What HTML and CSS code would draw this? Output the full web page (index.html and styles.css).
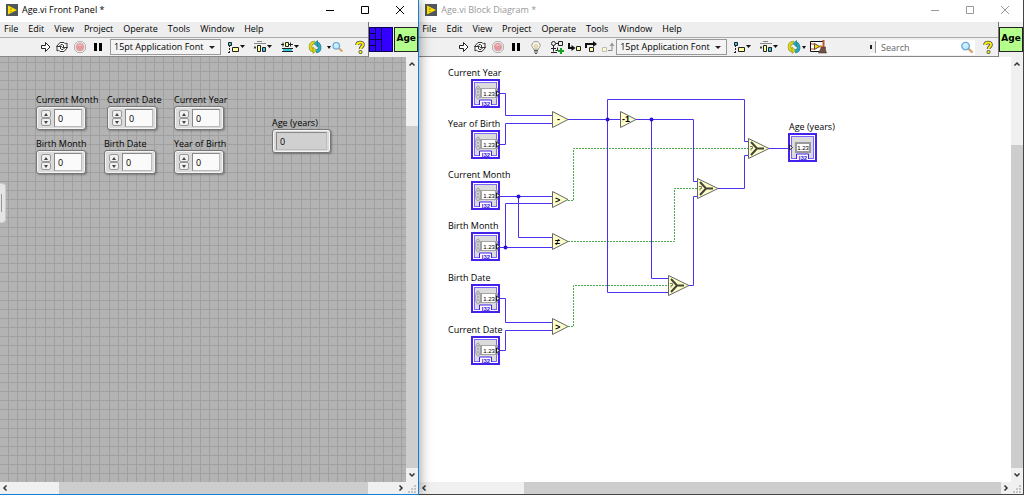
FILE: index.html
```html
<!doctype html>

<html lang="en">

	<head>
		<meta charset="utf-8" />
		<title>Age.vi</title>

		<link rel="stylesheet" href="styles.css">
	</head>

	<body>

		<!-- shared icons -->
		<svg class="defs" width="0" height="0" aria-hidden="true">
			<symbol id="i-app" viewBox="0 0 12 12">
				<rect width="12" height="12" fill="#50575c" />
				<path d="M2 1.5L11 6L2 10.5Z" fill="#ffe000" />
				<path d="M4 5h2M5 4v2M4 7.500h2" stroke="#a58a00" stroke-width=".6" />
			</symbol>
			<symbol id="i-min" viewBox="0 0 10 10"><path d="M1 5.500h8" stroke="currentColor" /></symbol>
			<symbol id="i-max" viewBox="0 0 10 10"><path d="M1.500 1.500h7v7h-7z" fill="none" stroke="currentColor" /></symbol>
			<symbol id="i-close" viewBox="0 0 10 10"><path d="M1 1l8 8M9 1l-8 8" stroke="currentColor" /></symbol>
			<symbol id="i-run" viewBox="0 0 16 16"><path d="M4.500 6.500h4v-3l4.500 4.500l-4.500 4.500v-3h-4z" fill="#fff" stroke="#222" /></symbol>
			<symbol id="i-loop" viewBox="0 0 16 16">
				<path d="M2.500 7.500L6 3.500h4l1.500 1.500L13 4v4.500H8.500L10 7L8.500 5.500H7L5 7.500z" fill="#fff" stroke="#333" />
				<path d="M13.500 8.500L10 12.500H6L4.500 11L3 12V7.500h4.500L6 9l1.500 1.500H9L11 8.500z" fill="#fff" stroke="#333" />
			</symbol>
			<symbol id="i-stop" viewBox="0 0 16 16">
				<path d="M5.500 2.500h5l3 3v5l-3 3h-5l-3-3v-5z" fill="#e4e4e4" stroke="#b4b4b4" />
				<circle cx="8" cy="8" r="4" fill="#e39a9e" />
				<path d="M5 7c1-2.500 5-2.500 6 0z" fill="#efb8bb" />
			</symbol>
			<symbol id="i-pause" viewBox="0 0 16 16"><path d="M4 4h3v8H4zM9 4h3v8H9z" fill="#000" /></symbol>
			<symbol id="i-bulb" viewBox="0 0 16 16">
				<path d="M6 10C2 7 4 2.500 8 2.500S14 7 10 10v1H6z" fill="#f6f3e2" stroke="#999" />
				<path d="M6.500 6l1 4M9.500 6l-1 4M6.500 6h3" fill="none" stroke="#d8c490" />
				<path d="M6 11.500h4M6 13h4M7 14.500h2" stroke="#555" />
			</symbol>
			<symbol id="i-retain" viewBox="0 0 16 16">
				<circle cx="4.500" cy="4.500" r="2" fill="none" stroke="#222" />
				<path d="M4.500 6.500v6M2 13.500h6M7 4.500h2M9.500 2.500h4v4h-4z" fill="none" stroke="#222" />
				<path d="M2 9.500h5M8.500 8.500v3h-2" fill="none" stroke="#222" />
				<path d="M9 12h6M12 9v6" stroke="#13a322" stroke-width="2" />
			</symbol>
			<symbol id="i-into" viewBox="0 0 16 16">
				<path d="M3 4v5h3" fill="none" stroke="#111" stroke-width="2" />
				<path d="M5.500 6l4 3l-4 3z" fill="#111" />
				<path d="M10.500 7.500h4v4h-4z" fill="#ffffb0" stroke="#222" />
			</symbol>
			<symbol id="i-over" viewBox="0 0 16 16">
				<path d="M3 9V5h8" fill="none" stroke="#111" stroke-width="2" />
				<path d="M10 2l4 3l-4 3z" fill="#111" />
				<path d="M6.500 8.500h4v4h-4z" fill="#ffffb0" stroke="#222" />
			</symbol>
			<symbol id="i-out" viewBox="0 0 16 16">
				<path d="M2.500 8.500h4v4h-4z" fill="#ffffc4" stroke="#bbb" />
				<path d="M8 11.500h4V6" fill="none" stroke="#888" />
				<path d="M9.500 7L12 3.500L14.500 7z" fill="#999" />
			</symbol>
			<symbol id="i-align" viewBox="0 0 20 16">
				<path d="M3.500 3v11M2 13.500h3" stroke="#222" stroke-dasharray="2 1" />
				<path d="M2.500 3.500h3v3h-3z" fill="#39c7dd" stroke="#222" />
				<path d="M6.500 8.500h6v4h-6z" fill="#ffffa0" stroke="#222" />
				<path d="M14 6h5l-2.500 3z" fill="#111" />
			</symbol>
			<symbol id="i-dist" viewBox="0 0 20 16">
				<path d="M1 4.500h12M4 2.500h5" stroke="#888" />
				<path d="M1 8.500h2M2 7v3" stroke="#444" />
				<path d="M4.500 6.500h3v6h-3z" fill="#ffffa0" stroke="#222" />
				<path d="M9.500 8.500h3v4h-3z" fill="#39c7dd" stroke="#222" />
				<path d="M14 6h5l-2.500 3z" fill="#111" />
			</symbol>
			<symbol id="i-size" viewBox="0 0 20 16">
				<path d="M1 5.500h3M9 5.500h4M3 3.500v4M10.500 3.500v4" stroke="#222" />
				<path d="M5.500 3.500h3v4h-3z" fill="#ffffa0" stroke="#222" />
				<path d="M2 9.500h11M2 12.500h11" stroke="#222" />
				<path d="M3 10h9v2H3z" fill="#39c7dd" />
				<path d="M14 6h5l-2.500 3z" fill="#111" />
			</symbol>
			<symbol id="i-order" viewBox="0 0 16 16">
				<path d="M8 3.500C4.500 3.500 3 6 3.500 8.500C4 10.500 5.500 11.500 7 11.500" fill="none" stroke="#8f8b1c" stroke-width="3.500" />
				<path d="M8 3.500C4.500 3.500 3 6 3.500 8.500C4 10.500 5.500 11.500 7 11.500" fill="none" stroke="#dcd41c" stroke-width="2.500" />
				<path d="M6 8l4 3.500L6 14.500z" fill="#dcd41c" stroke="#8f8b1c" stroke-width=".6" />
				<path d="M9 12.500C12 12 13 10 12.500 7.500C12 5.500 11 4.500 9.500 4.500" fill="none" stroke="#1b6f80" stroke-width="3.500" />
				<path d="M9 12.500C12 12 13 10 12.500 7.500C12 5.500 11 4.500 9.500 4.500" fill="none" stroke="#28abc2" stroke-width="2.500" />
				<path d="M10.500 1.500L7 4.500l3.500 3.500z" fill="#28abc2" stroke="#1b6f80" stroke-width=".6" />
			</symbol>
			<symbol id="i-lens" viewBox="0 0 16 16">
				<path d="M9 9l5 4.500" stroke="#d9a066" stroke-width="2.500" />
				<circle cx="6.500" cy="6.500" r="4" fill="#c4ecff" stroke="#6aa8dd" stroke-width="1.500" />
				<path d="M4.500 6C5 4.500 6 4 7.500 4.500" fill="none" stroke="#fff" />
			</symbol>
			<symbol id="i-clean" viewBox="0 0 18 16">
				<path d="M1.500 2.500h12v10h-12z" fill="#fff" />
				<path d="M14 2.500H1.500v10H10" fill="none" stroke="#111" />
				<path d="M2 5h3M2 10h3" stroke="#e03030" />
				<path d="M5.500 4.500l5 3l-5 3z" fill="#ffe000" stroke="#222" stroke-width=".8" />
				<path d="M10 7.500h3" stroke="#e67817" stroke-width="2" />
				<path d="M14.500 1v7" stroke="#b9573c" stroke-width="2" />
				<path d="M12.500 8h4v3l1 3h-8z" fill="#705040" stroke="#402820" stroke-width=".5" />
			</symbol>
			<symbol id="i-help" viewBox="0 0 16 16">
				<path d="M5 6C5 2.500 11.500 2.500 11 6C10.500 8 8.500 8 8.500 10" fill="none" stroke="#444" stroke-width="3.500" />
				<circle cx="8.500" cy="13" r="2" fill="#444" />
				<path d="M5 6C5 2.500 11.500 2.500 11 6C10.500 8 8.500 8 8.500 10" fill="none" stroke="#ffee10" stroke-width="2" />
				<circle cx="8.500" cy="13" r="1.200" fill="#ffee10" />
			</symbol>
			<symbol id="i-chevron" viewBox="0 0 8 8"><path d="M1.500 5.500L4 3l2.500 2.500" fill="none" stroke="#333" stroke-width="1.500" /></symbol>
		</svg>

		<section class="window front">
			<header class="titlebar">
				<svg class="app-icon"><use href="#i-app" /></svg>
				<h1>Age.vi Front Panel *</h1>
				<button class="win-btn" aria-label="Minimize"><svg><use href="#i-min" /></svg></button>
				<button class="win-btn" aria-label="Maximize"><svg><use href="#i-max" /></svg></button>
				<button class="win-btn" aria-label="Close"><svg><use href="#i-close" /></svg></button>
			</header>

			<div class="bars">
				<nav class="menu">
					<button>File</button>
					<button>Edit</button>
					<button>View</button>
					<button>Project</button>
					<button>Operate</button>
					<button>Tools</button>
					<button>Window</button>
					<button>Help</button>
				</nav>
				<div class="toolbar">
					<button class="tool" aria-label="Run"><svg><use href="#i-run" /></svg></button>
					<button class="tool" aria-label="Run continuously"><svg><use href="#i-loop" /></svg></button>
					<button class="tool stop" aria-label="Abort"><svg><use href="#i-stop" /></svg></button>
					<button class="tool" aria-label="Pause"><svg><use href="#i-pause" /></svg></button>
					<div class="font-box">
						<select aria-label="Font">
							<option>15pt Application Font</option>
						</select>
					</div>
					<button class="tool drop" aria-label="Align objects"><svg><use href="#i-align" /></svg></button>
					<button class="tool drop" aria-label="Distribute objects"><svg><use href="#i-dist" /></svg></button>
					<button class="tool drop" aria-label="Resize objects"><svg><use href="#i-size" /></svg></button>
					<button class="tool wide" aria-label="Reorder"><svg><use href="#i-order" /></svg></button>
					<button class="tool find" aria-label="Search"><svg><use href="#i-lens" /></svg></button>
					<button class="tool help" aria-label="Context help"><svg><use href="#i-help" /></svg></button>
				</div>
				<div class="pane">
					<svg class="connector" viewBox="0 0 24 25">
						<rect width="24" height="25" fill="#3300ff" />
						<path d="M.5 .5h23v24H.5zM6.500 0v25M12.500 0v25M0 6.500h6M0 12.500h12M0 18.500h6" fill="none" stroke="#0b0050" />
					</svg>
					<div class="vi-icon">Age</div>
				</div>
			</div>

			<div class="view">
				<div class="panel">
					<div class="side-tab"></div>
					<div class="control cur-month">
						<label for="cur-month">Current Month</label>
						<div class="numeric">
							<span class="spin"><button aria-label="Increase"></button><button aria-label="Decrease"></button></span>
							<input type="text" id="cur-month" value="0" />
						</div>
					</div>
					<div class="control cur-date">
						<label for="cur-date">Current Date</label>
						<div class="numeric">
							<span class="spin"><button aria-label="Increase"></button><button aria-label="Decrease"></button></span>
							<input type="text" id="cur-date" value="0" />
						</div>
					</div>
					<div class="control cur-year">
						<label for="cur-year">Current Year</label>
						<div class="numeric">
							<span class="spin"><button aria-label="Increase"></button><button aria-label="Decrease"></button></span>
							<input type="text" id="cur-year" value="0" />
						</div>
					</div>
					<div class="control birth-month">
						<label for="birth-month">Birth Month</label>
						<div class="numeric">
							<span class="spin"><button aria-label="Increase"></button><button aria-label="Decrease"></button></span>
							<input type="text" id="birth-month" value="0" />
						</div>
					</div>
					<div class="control birth-date">
						<label for="birth-date">Birth Date</label>
						<div class="numeric">
							<span class="spin"><button aria-label="Increase"></button><button aria-label="Decrease"></button></span>
							<input type="text" id="birth-date" value="0" />
						</div>
					</div>
					<div class="control birth-year">
						<label for="birth-year">Year of Birth</label>
						<div class="numeric">
							<span class="spin"><button aria-label="Increase"></button><button aria-label="Decrease"></button></span>
							<input type="text" id="birth-year" value="0" />
						</div>
					</div>
					<div class="control age">
						<label for="age">Age (years)</label>
						<div class="numeric">
							<input type="text" id="age" value="0" readonly />
						</div>
					</div>
				</div>
				<div class="vscroll">
					<button class="up" aria-label="Scroll up"><svg><use href="#i-chevron" /></svg></button>
					<div class="track"><div class="thumb"></div></div>
					<button class="down" aria-label="Scroll down"><svg><use href="#i-chevron" /></svg></button>
				</div>
				<div class="hscroll">
					<button class="left" aria-label="Scroll left"><svg><use href="#i-chevron" /></svg></button>
					<div class="track"><div class="thumb"></div></div>
					<button class="right" aria-label="Scroll right"><svg><use href="#i-chevron" /></svg></button>
				</div>
				<svg class="grip" viewBox="0 0 12 12"><path d="M8 3h2v2H8zM8 6h2v2H8zM8 9h2v2H8zM5 6h2v2H5zM5 9h2v2H5zM2 9h2v2H2z" fill="#c4c4c4" /></svg>
			</div>
		</section>

		<section class="window block">
			<header class="titlebar">
				<svg class="app-icon"><use href="#i-app" /></svg>
				<h1>Age.vi Block Diagram *</h1>
				<button class="win-btn" aria-label="Minimize"><svg><use href="#i-min" /></svg></button>
				<button class="win-btn" aria-label="Maximize"><svg><use href="#i-max" /></svg></button>
				<button class="win-btn" aria-label="Close"><svg><use href="#i-close" /></svg></button>
			</header>

			<div class="bars">
				<nav class="menu">
					<button>File</button>
					<button>Edit</button>
					<button>View</button>
					<button>Project</button>
					<button>Operate</button>
					<button>Tools</button>
					<button>Window</button>
					<button>Help</button>
				</nav>
				<div class="toolbar">
					<button class="tool" aria-label="Run"><svg><use href="#i-run" /></svg></button>
					<button class="tool" aria-label="Run continuously"><svg><use href="#i-loop" /></svg></button>
					<button class="tool stop" aria-label="Abort"><svg><use href="#i-stop" /></svg></button>
					<button class="tool" aria-label="Pause"><svg><use href="#i-pause" /></svg></button>
					<button class="tool wide" aria-label="Highlight execution"><svg><use href="#i-bulb" /></svg></button>
					<button class="tool" aria-label="Retain wire values"><svg><use href="#i-retain" /></svg></button>
					<button class="tool" aria-label="Step into"><svg><use href="#i-into" /></svg></button>
					<button class="tool" aria-label="Step over"><svg><use href="#i-over" /></svg></button>
					<button class="tool" aria-label="Step out"><svg><use href="#i-out" /></svg></button>
					<div class="font-box">
						<select aria-label="Font">
							<option>15pt Application Font</option>
						</select>
					</div>
					<button class="tool drop" aria-label="Align objects"><svg><use href="#i-align" /></svg></button>
					<button class="tool drop" aria-label="Distribute objects"><svg><use href="#i-dist" /></svg></button>
					<button class="tool drop more" aria-label="Reorder"><svg><use href="#i-order" /></svg></button>
					<button class="tool clean" aria-label="Clean up diagram"><svg><use href="#i-clean" /></svg></button>
					<div class="search">
						<input type="text" placeholder="Search" aria-label="Search" />
						<svg><use href="#i-lens" /></svg>
					</div>
					<button class="tool help" aria-label="Context help"><svg><use href="#i-help" /></svg></button>
				</div>
				<div class="pane">
					<div class="vi-icon">Age</div>
				</div>
			</div>

			<div class="view">
				<div class="canvas">
					<svg class="diagram" width="420" height="320" viewBox="0 0 420 320">
						<defs>
							<symbol id="terminal" viewBox="0 0 29 29">
								<rect x="1" y="1" width="27" height="27" fill="#fff" stroke="#4422ee" stroke-width="2" />
								<rect x="3.500" y="3.500" width="22" height="22" fill="#dcdcdc" stroke="#7a66ff" />
								<path d="M8.500 26v-5h12v5" fill="#fff" stroke="#4422ee" />
							</symbol>
							<symbol id="source" viewBox="0 0 29 29">
								<use href="#terminal" width="29" height="29" />
								<path d="M8 9h19v10H8z" fill="#a4a4a4" />
								<ellipse cx="7" cy="13.500" rx="2.500" ry="6.500" fill="#d0d0d0" stroke="#a0a0a0" />
								<path d="M6 10h2M6 13h2M6 16h2" stroke="#909090" />
								<path d="M11 10h13v8H11z" fill="#fff" />
								<path d="M25.500 12l3 2.500l-3 2.500z" fill="#fff" stroke="#222" />
								<text class="digits" x="18" y="17">1.23</text>
								<text class="type" x="15" y="27">I32</text>
							</symbol>
							<symbol id="sink" viewBox="0 0 29 29">
								<use href="#terminal" width="29" height="29" />
								<path d="M7 9h16v11H7z" fill="#999" />
								<path d="M9 11h12v7H9z" fill="#fff" />
								<path d="M1.500 12l3 2.500l-3 2.500z" fill="#fff" stroke="#222" />
								<text class="digits" x="15" y="17">1.23</text>
								<text class="type" x="15" y="27">I32</text>
							</symbol>
							<symbol id="func" viewBox="0 0 17 17">
								<path d="M.5 .5L16 8.500L.5 16.500z" fill="#ffffcc" stroke="#666" />
							</symbol>
							<symbol id="select" viewBox="0 0 22 22">
								<path d="M.5 .5L21 10.500L.5 20.500z" fill="#ffffcc" stroke="#666" />
								<path d="M3 4l6 6.500M3 17l6-6.500M9 10.500h7" fill="none" stroke="#444433" stroke-width="2" />
								<path d="M2 8.500h2.500v2H3v2" fill="none" stroke="#77775a" />
							</symbol>
						</defs>

						<!-- boolean wires -->
						<g class="wire-bool">
							<path d="M149 143.500h5.500V91.500H329" />
							<path d="M149 184.500h106.500v-53H278" />
							<path d="M149 269.500h5.500v-41H249" />
						</g>

						<!-- integer wires -->
						<g class="wire-int">
							<path d="M81 36.500h5.500v22H133" />
							<path d="M81 87.500h5.500v-21H133" />
							<path d="M149 62.500h52M217 62.500h57.500v62H278" />
							<path d="M249 235.500h-60.500V42.500h137v42H329" />
							<path d="M232.500 62.500v159H249" />
							<path d="M81 139.500h52M99.500 139.500v41H133" />
							<path d="M81 190.500h52M86.500 190.500v-44H133" />
							<path d="M81 241.500h5.500v24H133" />
							<path d="M81 293.500h5.500v-20H133" />
							<path d="M270 228.500h4.500v-89H278" />
							<path d="M299 131.500h26.500v-33H329" />
							<path d="M350 91.500h19" />
						</g>
						<g class="dots">
							<circle cx="188.500" cy="62.500" r="2" />
							<circle cx="232.500" cy="62.500" r="2" />
							<circle cx="99.500" cy="139.500" r="2" />
							<circle cx="86.500" cy="190.500" r="2" />
						</g>

						<use href="#source" x="52" y="22" width="29" height="29" />
						<use href="#source" x="52" y="73" width="29" height="29" />
						<use href="#source" x="52" y="124" width="29" height="29" />
						<use href="#source" x="52" y="175" width="29" height="29" />
						<use href="#source" x="52" y="227" width="29" height="29" />
						<use href="#source" x="52" y="279" width="29" height="29" />
						<use href="#sink" x="369" y="76" width="29" height="29" />

						<use href="#func" x="133" y="54" width="17" height="17" />
						<use href="#func" x="201" y="54" width="17" height="17" />
						<use href="#func" x="133" y="134" width="17" height="17" />
						<use href="#func" x="133" y="176" width="17" height="17" />
						<use href="#func" x="133" y="261" width="17" height="17" />
						<use href="#select" x="329" y="81" width="22" height="22" />
						<use href="#select" x="278" y="121" width="22" height="22" />
						<use href="#select" x="249" y="218" width="22" height="22" />

						<g class="ops">
							<text x="138" y="65">-</text>
							<text x="203" y="65">-1</text>
							<text x="136" y="146">&gt;</text>
							<text x="136" y="188">≠</text>
							<text x="136" y="273">&gt;</text>
						</g>

						<g class="names">
							<text x="29" y="19">Current Year</text>
							<text x="29" y="70">Year of Birth</text>
							<text x="29" y="121">Current Month</text>
							<text x="29" y="172">Birth Month</text>
							<text x="29" y="224">Birth Date</text>
							<text x="29" y="276">Current Date</text>
							<text x="370" y="73">Age (years)</text>
						</g>
					</svg>
				</div>
				<div class="vscroll">
					<button class="up" aria-label="Scroll up"><svg><use href="#i-chevron" /></svg></button>
					<div class="track"><div class="thumb"></div></div>
					<button class="down" aria-label="Scroll down"><svg><use href="#i-chevron" /></svg></button>
				</div>
				<div class="hscroll">
					<button class="left" aria-label="Scroll left"><svg><use href="#i-chevron" /></svg></button>
					<div class="track"><div class="thumb"></div></div>
					<button class="right" aria-label="Scroll right"><svg><use href="#i-chevron" /></svg></button>
				</div>
				<svg class="grip" viewBox="0 0 12 12"><path d="M8 3h2v2H8zM8 6h2v2H8zM8 9h2v2H8zM5 6h2v2H5zM5 9h2v2H5zM2 9h2v2H2z" fill="#c4c4c4" /></svg>
			</div>
		</section>

	</body>

</html>
```
FILE: styles.css
```css
* {
	box-sizing: border-box;
}

body {
	display: flex;
	margin: 0;
	height: 100vh;
	overflow: hidden;
	background-color: #fff;
	font-size: 9px;
	line-height: 12px;
	font-family: "Segoe UI", "Open Sans", "Noto Sans", sans-serif;
	color: #000;
}

button, input, select {
	margin: 0;
	padding: 0;
	border: none;
	border-radius: 0;
	background: none;
	font: inherit;
	color: inherit;
}

.defs {
	position: absolute;
}

/* windows */

.window {
	display: flex;
	flex-direction: column;
	min-width: 0;
	background-color: #fff;
}

.front {
	position: relative;
	z-index: 1;
	flex: 419 1 0;
	border-right: 1px solid #0f7fd8;
	border-bottom: 1px solid #0f7fd8;
	box-shadow: 0 0 12px rgba(0, 0, 0, .45);
}

.block {
	flex: 605 1 0;
	border-right: 1px solid #444;
	border-bottom: 1px solid #444;
}

.titlebar {
	display: flex;
	align-items: center;
	height: 22px;
	padding: 0 1px 3px 6px;
}

.titlebar h1 {
	flex: 1;
	margin: 0 0 0 4px;
	font-size: 9px;
	font-weight: normal;
}

.app-icon {
	width: 12px;
	height: 12px;
}

.win-btn {
	width: 35px;
	height: 18px;
}

.win-btn svg {
	display: block;
	width: 10px;
	height: 10px;
	margin: 0 auto;
}

.block .titlebar {
	color: #999;
}

/* menu and toolbar */

.bars {
	display: grid;
	grid-template-columns: 1fr auto;
	background-color: #f0f0f0;
}

.menu {
	display: flex;
	gap: 10px;
	height: 16px;
	padding: 0 0 2px 4px;
	border-bottom: 1px solid #aaa;
	background-color: #eee;
}

.block .menu {
	padding-left: 3px;
}

.toolbar {
	display: flex;
	grid-column: 1;
	align-items: center;
	height: 19px;
	padding-left: 36px;
	border-bottom: 1px solid #888;
}

.block .toolbar {
	padding-left: 35px;
}

.tool {
	flex: none;
	width: 17px;
	height: 16px;
}

.tool svg {
	display: block;
	width: 16px;
	height: 16px;
	margin: 0 auto;
}

.stop {
	width: 19px;
}

.drop {
	width: 27px;
}

.drop svg {
	width: 20px;
}

.wide {
	width: 24px;
}

.more {
	display: flex;
	align-items: center;
	padding-left: 4px;
}

.more svg {
	width: 16px;
	margin: 0;
}

.more::after, .find::before {
	content: "";
	border: 2px solid transparent;
	border-top: 3px solid #111;
	border-bottom: none;
}

.find {
	display: flex;
	align-items: center;
}

.clean svg {
	width: 18px;
}

.help {
	margin-left: auto;
}

.font-box {
	position: relative;
	width: 111px;
	height: 16px;
	margin: 0 1px 0 4px;
	border: 1px solid #999;
	background-color: #f4f4f4;
}

.block .font-box {
	margin-left: 0;
}

.font-box::after {
	content: "";
	position: absolute;
	top: 6px;
	right: 5px;
	border: 3px solid transparent;
	border-top-color: #222;
	border-bottom: none;
}

.font-box select {
	display: block;
	width: 100%;
	height: 14px;
	padding-left: 3px;
	appearance: none;
}

.search {
	display: flex;
	align-items: center;
	width: 108px;
	height: 15px;
	margin-left: auto;
	padding-right: 3px;
	background-color: #fff;
	background-clip: content-box;
}

/* splitter in front of the search box */
.search::before {
	content: "";
	width: 5px;
	height: 12px;
	border-right: 1px solid #999;
	background: linear-gradient(90deg, #222 2px, #f0f0f0 2px) center / 100% 4px no-repeat #f0f0f0;
}

.search input {
	flex: 1;
	min-width: 0;
	height: 15px;
	padding-left: 5px;
}

.search input::placeholder {
	color: #666;
}

.search svg {
	width: 16px;
	height: 15px;
}

.search ~ .help {
	width: 20px;
	margin-left: 0;
}

.pane {
	display: flex;
	grid-row: 1 / 3;
	grid-column: 2;
	align-items: center;
	gap: 1px;
	border-left: 1px solid #777;
}

.connector {
	width: 24px;
	height: 25px;
}

.vi-icon {
	width: 24px;
	height: 25px;
	border: 1px solid #222;
	background-color: #b4ff8c;
	font: bold 9px/21px "DejaVu Sans", sans-serif;
	text-align: center;
}

/* scrolled area */

.view {
	display: grid;
	flex: 1;
	grid-template-rows: 1fr 12px;
	grid-template-columns: 1fr 12px;
	min-height: 0;
}

.vscroll, .hscroll {
	display: flex;
	background-color: #f0f0f0;
}

.vscroll {
	flex-direction: column;
}

.vscroll button {
	height: 14px;
}

.hscroll button {
	width: 10px;
}

.vscroll svg, .hscroll svg {
	display: block;
	width: 8px;
	height: 8px;
	margin: 0 auto;
}

.down svg {
	transform: rotate(180deg);
}

.left svg {
	transform: rotate(-90deg);
}

.right svg {
	transform: rotate(90deg);
}

.track {
	display: flex;
	flex: 1;
}

.vscroll .track {
	flex-direction: column;
}

.thumb {
	flex: 1;
	background-color: #cdcdcd;
}

.front .vscroll .track {
	padding-top: 55px;
}

.front .hscroll .track {
	padding: 0 7% 0 12%;
}

.block .vscroll .track {
	padding-top: 74px;
}

.block .hscroll .track {
	padding-left: 16%;
}

.grip {
	width: 12px;
	height: 12px;
	background-color: #f0f0f0;
}

/* front panel */

.panel {
	position: relative;
	overflow: hidden;
	background-color: #b3b3b3;
	background-image:
		repeating-linear-gradient(90deg, transparent 0 8px, #a0a0a0 8px 9px, transparent 9px calc(64px / 7)),
		repeating-linear-gradient(transparent 0 5px, #a0a0a0 5px 6px, transparent 6px calc(64px / 7));
}

.side-tab {
	position: absolute;
	top: 126px;
	left: 0;
	width: 6px;
	height: 40px;
	border: 1px solid #ccc;
	border-left: none;
	border-radius: 0 4px 4px 0;
	background: linear-gradient(#999, #999) 1px center / 1px 18px no-repeat #e4e4e4;
}

.control {
	position: absolute;
	width: 50px;
	white-space: nowrap;
}

.control label {
	display: block;
}

.numeric {
	display: flex;
	gap: 3px;
	height: 24px;
	padding: 2px 3px;
	border: 1px solid #777;
	border-radius: 3px;
	background-color: #dadada;
	box-shadow: inset 0 0 0 1px #f4f4f4, 1px 1px 2px rgba(0, 0, 0, .3);
}

.numeric input {
	flex: 1;
	min-width: 0;
	height: 18px;
	padding-left: 3px;
	border: 1px solid #888;
	border-right-color: #bbb;
	border-bottom-color: #bbb;
	background-color: #fafafa;
}

.spin {
	display: flex;
	flex-direction: column;
	justify-content: center;
	width: 10px;
	margin-left: 1px;
}

.spin button {
	display: grid;
	place-items: center;
	height: 8px;
	border: 1px solid #999;
	border-radius: 2px;
	background-color: #f0f0f0;
}

.spin button::before {
	content: "";
	border: 2px solid transparent;
	border-top: none;
	border-bottom: 3px solid #444;
}

.spin button:last-child::before {
	transform: rotate(180deg);
}

.cur-month, .cur-date, .cur-year {
	top: 37px;
}

.birth-month, .birth-date, .birth-year {
	top: 81px;
}

.cur-month, .birth-month {
	left: 36px;
}

.cur-date {
	left: 107px;
}

.birth-date {
	left: 104px;
	width: 52px;
}

.cur-year, .birth-year {
	left: 174px;
}

.age {
	top: 60px;
	left: 272px;
	width: 59px;
}

.age input {
	background-color: #d0d0d0;
}

/* block diagram */

.canvas {
	overflow: hidden;
	background-color: #fff;
}

.diagram {
	display: block;
}

.wire-int, .wire-bool {
	fill: none;
	stroke: #4a33f0;
}

.wire-bool {
	stroke: #4aa84a;
	stroke-dasharray: 2 1;
}

.dots {
	fill: #2a10d8;
}

.digits {
	font: 6px "Liberation Sans", sans-serif;
	text-anchor: middle;
}

.type {
	font: bold 6px "Liberation Sans", sans-serif;
	text-anchor: middle;
	fill: #3311dd;
}

.ops {
	font: bold 9px "Liberation Sans", sans-serif;
}
```
